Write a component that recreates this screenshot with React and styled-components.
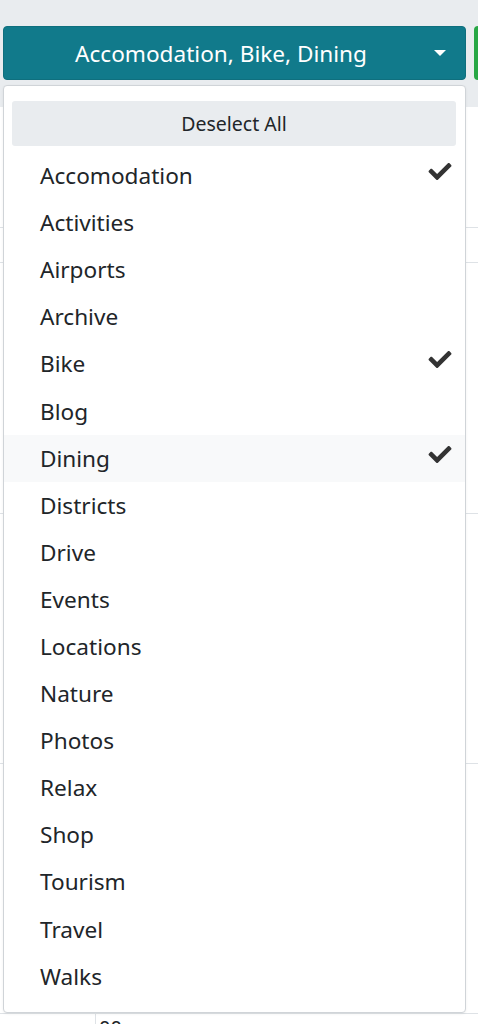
import styled, { createGlobalStyle } from 'styled-components';
import { FaCheck } from 'react-icons/fa';

const GlobalStyle = createGlobalStyle`
  html, body {
    margin: 0;
    padding: 0;
    background: #ffffff;
    font-family: "Noto Sans", "Open Sans", sans-serif;
    color: #212529;
  }
`;

const Page = styled.div`
  position: relative;
  width: 478px;
  height: 1024px;
  overflow: hidden;
`;

const Toolbar = styled.div`
  background-color: #e9ecef;
  height: 107px;
  box-sizing: border-box;
  padding: 26px 0 0 3px;
  display: flex;
  gap: 8px;
`;

const SelectButton = styled.button`
  width: 463px;
  height: 54px;
  flex-shrink: 0;
  border: 1px solid #0f6f7e;
  border-radius: 4px;
  background-color: #117a8b;
  color: #ffffff;
  font-family: inherit;
  font-size: 22.6px;
  display: flex;
  align-items: center;
  padding: 0 19px 0 12px;
  box-sizing: border-box;
`;

const ButtonLabel = styled.span`
  flex: 1;
  text-align: center;
  padding-right: 8px;
`;

const Caret = styled.span`
  width: 0;
  height: 0;
  border-left: 6.5px solid transparent;
  border-right: 6.5px solid transparent;
  border-top: 6.5px solid #ffffff;
`;

const GreenButton = styled.div`
  width: 60px;
  height: 54px;
  flex-shrink: 0;
  border-radius: 4px;
  background-color: #28a745;
`;

const Table = styled.div`
  display: flex;
  flex-direction: column;
`;

const Row = styled.div`
  height: ${({ h }) => h}px;
  border-bottom: 1px solid #dee2e6;
  box-sizing: border-box;
  display: flex;
`;

const Cell = styled.div`
  width: ${({ w }) => (w ? `${w}px` : 'auto')};
  flex: ${({ w }) => (w ? '0 0 auto' : '1')};
  border-right: ${({ divider }) => (divider ? '1px solid #dee2e6' : 'none')};
  font-size: 20px;
  padding: 4px 0 0 3px;
  line-height: 1;
`;

const Menu = styled.div`
  position: absolute;
  top: 85px;
  left: 3px;
  width: 463px;
  height: 928px;
  box-sizing: border-box;
  background: #ffffff;
  border: 1px solid #d0d4d8;
  border-radius: 4px;
  box-shadow: 0 1px 3px rgba(0, 0, 0, 0.06);
  padding: 15px 0 11px;
  display: flex;
  flex-direction: column;
`;

const DeselectButton = styled.div`
  margin: 0 9px 6px 8px;
  height: 45px;
  border-radius: 3px;
  background-color: #e9ecef;
  display: flex;
  align-items: center;
  justify-content: center;
  font-size: 19.5px;
  color: #212529;
`;

const Item = styled.div`
  height: 47.1px;
  display: flex;
  align-items: center;
  justify-content: space-between;
  padding: 0 12px 0 36px;
  font-size: 22.6px;
  color: #212529;
  background-color: ${({ active }) => (active ? '#f8f9fa' : 'transparent')};
`;

const Check = styled(FaCheck)`
  color: #333333;
  width: 26px;
  height: 23px;
  margin-top: -8px;
`;

const options = [
  'Accomodation', 'Activities', 'Airports', 'Archive', 'Bike', 'Blog',
  'Dining', 'Districts', 'Drive', 'Events', 'Locations', 'Nature',
  'Photos', 'Relax', 'Shop', 'Tourism', 'Travel', 'Walks',
];

const selected = ['Accomodation', 'Bike', 'Dining'];

export default function App() {
  return (
    <Page>
      <GlobalStyle />
      <Toolbar>
        <SelectButton>
          <ButtonLabel>{selected.join(', ')}</ButtonLabel>
          <Caret />
        </SelectButton>
        <GreenButton />
      </Toolbar>
      <Table>
        <Row h={121} />
        <Row h={35} />
        <Row h={251} />
        <Row h={250} />
        <Row h={250} />
        <Row h={40}>
          <Cell w={92} divider />
          <Cell>00</Cell>
        </Row>
      </Table>
      <Menu>
        <DeselectButton>Deselect All</DeselectButton>
        {options.map((o) => (
          <Item key={o} active={o === 'Dining'}>
            <span>{o}</span>
            {selected.includes(o) && <Check />}
          </Item>
        ))}
      </Menu>
    </Page>
  );
}
